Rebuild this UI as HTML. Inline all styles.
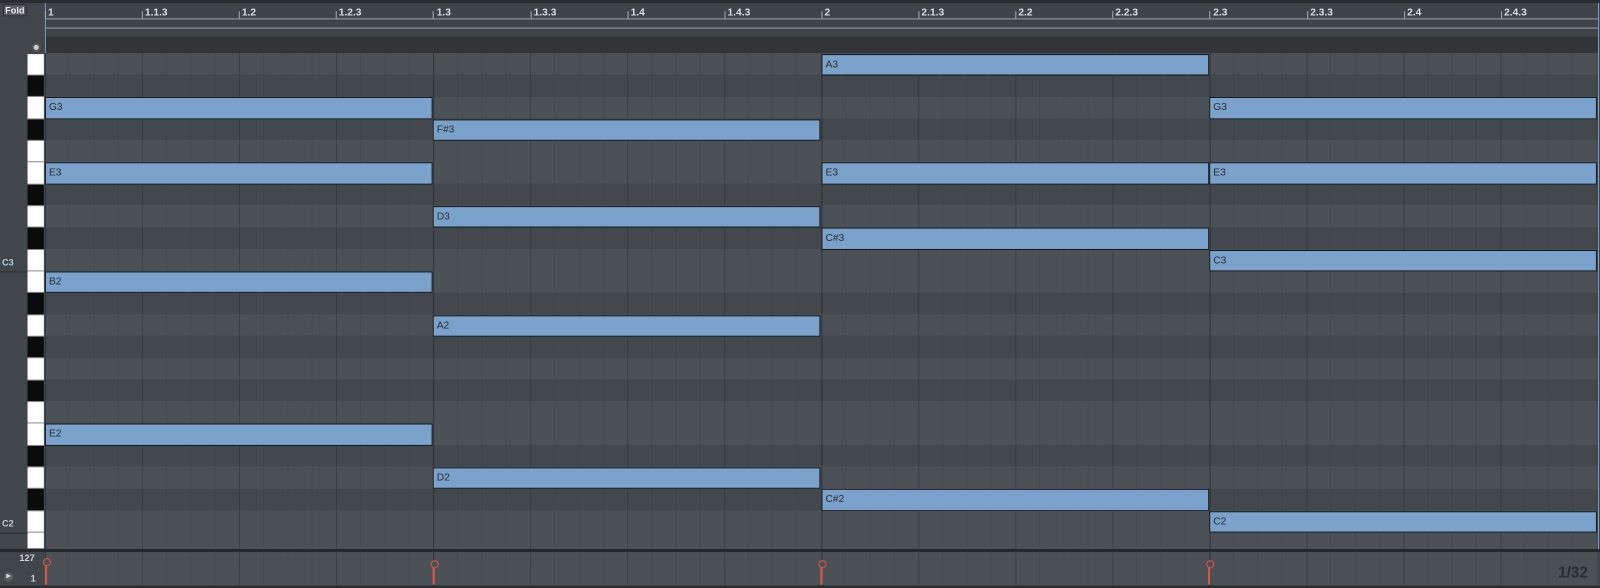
<!DOCTYPE html>
<html><head><style>
*{margin:0;padding:0;box-sizing:border-box}
html,body{width:1600px;height:588px;overflow:hidden;background:#2e3235}
#w{position:absolute;left:0;top:0;width:1568px;height:576px;transform:scale(1.02041);transform-origin:0 0;font-family:"Liberation Sans",sans-serif}
.a{position:absolute}
.grid{left:44px;top:52px;width:1522px;height:486px;background:#4b5155;overflow:hidden}
.vl{position:absolute;top:0;bottom:0;left:0;right:0;
background-image:
linear-gradient(to right,rgba(30,34,37,.4) 1px,transparent 1px),
linear-gradient(to right,rgba(30,34,37,.25) 1px,transparent 1px),
linear-gradient(to right,rgba(30,34,37,.13) 1px,transparent 1px);
background-size:380.5px 100%,95.125px 100%,23.78px 100%;}
.dk{position:absolute;left:0;right:0;height:21.33px;background:#43484c}
.n{position:absolute;height:21.33px;background:#7aa2ca;border:1px solid #151719;font-size:10px;color:#2a2e33;padding:5px 0 0 3px;line-height:10px}
.k{position:absolute;left:27px;width:16px;height:21.33px;background:#fff;border-bottom:1px solid #888}
.kb{background:#0a0b0c}
.rl{color:#d8dde2;font-size:10px;font-weight:bold;top:7px}
.tk{position:absolute;top:11px;width:1px;height:7px;background:#aab}
.mk{position:absolute;top:552px;width:2px;height:21px;background:#e0554d}
.mk:before{content:"";position:absolute;left:-2px;top:-3px;width:6px;height:6px;border-radius:50%;border:1px solid #e0554d;background:#4b5155}
</style></head><body><div id="w">
<div class="a" style="left:0;top:0;width:44px;height:576px;background:#41464a"></div>
<div class="a" style="left:0;top:0;width:1568px;height:3px;background:#2a2d30"></div>
<div class="a" style="left:3px;top:4px;width:23px;height:12px;background:#575c61;border:1px solid #2a2d30;color:#e6e9ec;font-size:9px;font-weight:bold;text-align:center;line-height:10px">Fold</div>
<div class="a" style="left:31px;top:42px;width:9px;height:9px;border-radius:50%;background:#c9ccd0;border:2px solid #555"></div>
<div class="a" style="left:44px;top:3px;width:1522px;height:33px;background:#3f4448"></div>
<div class="a" style="left:44px;top:18px;width:1522px;height:1px;background:#9aa0a6"></div>
<div class="a" style="left:44px;top:27px;width:1522px;height:1px;background:#9aa0a6"></div>
<div class="a" style="left:44px;top:36px;width:1522px;height:16px;background:#313538"></div>
<div class="a" style="left:1566px;top:3px;width:2px;height:573px;background:#41464a"></div>
<div class="a" style="left:1566px;top:3px;width:1px;height:535px;background:#7a9cc0"></div>
<div class="a" style="left:44px;top:3px;width:1px;height:535px;background:#7a9cc0"></div>
<div class="a rl" style="left:47px">1</div>
<div class="a rl" style="left:142px">1.1.3</div>
<div class="a rl" style="left:237px">1.2</div>
<div class="a rl" style="left:332px">1.2.3</div>
<div class="a rl" style="left:428px">1.3</div>
<div class="a rl" style="left:523px">1.3.3</div>
<div class="a rl" style="left:618px">1.4</div>
<div class="a rl" style="left:713px">1.4.3</div>
<div class="a rl" style="left:808px">2</div>
<div class="a rl" style="left:903px">2.1.3</div>
<div class="a rl" style="left:998px">2.2</div>
<div class="a rl" style="left:1093px">2.2.3</div>
<div class="a rl" style="left:1189px">2.3</div>
<div class="a rl" style="left:1284px">2.3.3</div>
<div class="a rl" style="left:1379px">2.4</div>
<div class="a rl" style="left:1474px">2.4.3</div>
<div class="tk" style="left:44px"></div><div class="tk" style="left:139px"></div><div class="tk" style="left:234px"></div><div class="tk" style="left:329px"></div><div class="tk" style="left:424px"></div><div class="tk" style="left:520px"></div><div class="tk" style="left:615px"></div><div class="tk" style="left:710px"></div><div class="tk" style="left:805px"></div><div class="tk" style="left:900px"></div><div class="tk" style="left:995px"></div><div class="tk" style="left:1090px"></div><div class="tk" style="left:1185px"></div><div class="tk" style="left:1281px"></div><div class="tk" style="left:1376px"></div><div class="tk" style="left:1471px"></div>
<div class="a grid">
<div class="dk" style="top:21.33px"></div>
<div class="dk" style="top:64px"></div>
<div class="dk" style="top:128px"></div>
<div class="dk" style="top:170.7px"></div>
<div class="dk" style="top:234.7px"></div>
<div class="dk" style="top:277.3px"></div>
<div class="dk" style="top:320px"></div>
<div class="dk" style="top:384px"></div>
<div class="dk" style="top:426.7px"></div>
<div class="vl"></div>
<div class="n" style="left:761px;top:0.7px;width:380px">A3</div>
<div class="n" style="left:0;top:43.4px;width:380px">G3</div>
<div class="n" style="left:1141px;top:43.4px;width:380px">G3</div>
<div class="n" style="left:380px;top:64.7px;width:380px">F#3</div>
<div class="n" style="left:0;top:107.4px;width:380px">E3</div>
<div class="n" style="left:761px;top:107.4px;width:380px">E3</div>
<div class="n" style="left:1141px;top:107.4px;width:380px">E3</div>
<div class="n" style="left:380px;top:150px;width:380px">D3</div>
<div class="n" style="left:761px;top:171.3px;width:380px">C#3</div>
<div class="n" style="left:1141px;top:192.7px;width:380px">C3</div>
<div class="n" style="left:0;top:214px;width:380px">B2</div>
<div class="n" style="left:380px;top:256.7px;width:380px">A2</div>
<div class="n" style="left:0;top:363.3px;width:380px">E2</div>
<div class="n" style="left:380px;top:406px;width:380px">D2</div>
<div class="n" style="left:761px;top:427.3px;width:380px">C#2</div>
<div class="n" style="left:1141px;top:448.7px;width:380px">C2</div>
</div>
<div class="k" style="top:52.7px"></div>
<div class="k kb" style="top:74px"></div>
<div class="k" style="top:95.4px"></div>
<div class="k kb" style="top:116.7px"></div>
<div class="k" style="top:138px"></div>
<div class="k" style="top:159.4px"></div>
<div class="k kb" style="top:180.7px"></div>
<div class="k" style="top:202px"></div>
<div class="k kb" style="top:223.3px"></div>
<div class="k" style="top:244.7px"></div>
<div class="k" style="top:266px"></div>
<div class="k kb" style="top:287.3px"></div>
<div class="k" style="top:308.7px"></div>
<div class="k kb" style="top:330px"></div>
<div class="k" style="top:351.3px"></div>
<div class="k kb" style="top:372.7px"></div>
<div class="k" style="top:394px"></div>
<div class="k" style="top:415.3px"></div>
<div class="k kb" style="top:436.7px"></div>
<div class="k" style="top:458px"></div>
<div class="k kb" style="top:479.3px"></div>
<div class="k" style="top:500.7px"></div>
<div class="k" style="top:522px;height:16px"></div>
<div class="a" style="left:0;top:266px;width:27px;height:1px;background:#2c3033"></div>
<div class="a" style="left:0;top:522px;width:27px;height:1px;background:#2c3033"></div>
<div class="a" style="left:2px;top:252px;color:#b8c8da;font-size:9px;font-weight:bold">C3</div>
<div class="a" style="left:2px;top:508px;color:#b8c8da;font-size:9px;font-weight:bold">C2</div>
<div class="a" style="left:0;top:538px;width:1568px;height:3px;background:#26292b"></div>
<div class="a" style="left:44px;top:541px;width:1522px;height:33px;background:#4b5155"><div class="vl"></div></div>
<div class="a" style="left:0;top:574px;width:1568px;height:2px;background:#2a2d30"></div>
<div class="a" style="left:19px;top:542px;color:#d0d4d8;font-size:9px;font-weight:bold">127</div>
<div class="a" style="left:30px;top:562px;color:#d0d4d8;font-size:9px;font-weight:bold">1</div>
<div class="a" style="left:4px;top:561px;width:9px;height:9px;border-radius:50%;background:#5a5f64;color:#ddd;font-size:6px;text-align:center;line-height:9px">▶</div>
<div class="mk" style="left:44px;top:550px;height:23px"></div>
<div class="mk" style="left:424px"></div>
<div class="mk" style="left:804px"></div>
<div class="mk" style="left:1184px"></div>
<div class="a" style="left:1527px;top:553px;color:#2a2e32;font-size:15px;font-weight:bold">1/32</div>
</div></body></html>
